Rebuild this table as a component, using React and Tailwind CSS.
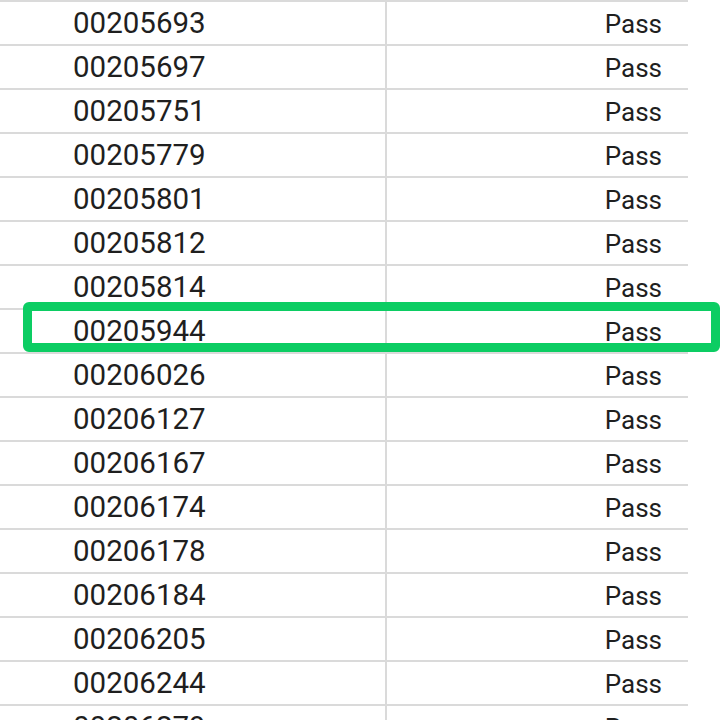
const IDS = [
  "00205693", "00205697", "00205751", "00205779", "00205801", "00205812",
  "00205814", "00205944", "00206026", "00206127", "00206167", "00206174",
  "00206178", "00206184", "00206205", "00206244", "00206279",
];

export default function App() {
  return (
    <div className="relative w-[720px] h-[720px] overflow-hidden bg-white text-[#1f1f1f]"
      style={{ fontFamily: "Roboto, 'Liberation Sans', sans-serif" }}>
      <div className="w-[688px]">
        {IDS.map((id) => (
          <div key={id} className="flex h-[44px] border-t-2 border-[#dadada]">
            <div className="w-[385px] flex items-center pl-[73px] pt-[2px] text-[29.5px] leading-none">{id}</div>
            <div className="w-[2px] bg-[#dadada]" />
            <div className="flex-1 flex items-center justify-end pr-[26px] text-[26px] leading-none pt-[1px]">Pass</div>
          </div>
        ))}
      </div>
      {/* highlighted row */}
      <div className="absolute left-[23px] top-[302px] w-[697px] h-[50px] border-[9px] border-[#0ccd63] rounded-[6px]" />
    </div>
  );
}
